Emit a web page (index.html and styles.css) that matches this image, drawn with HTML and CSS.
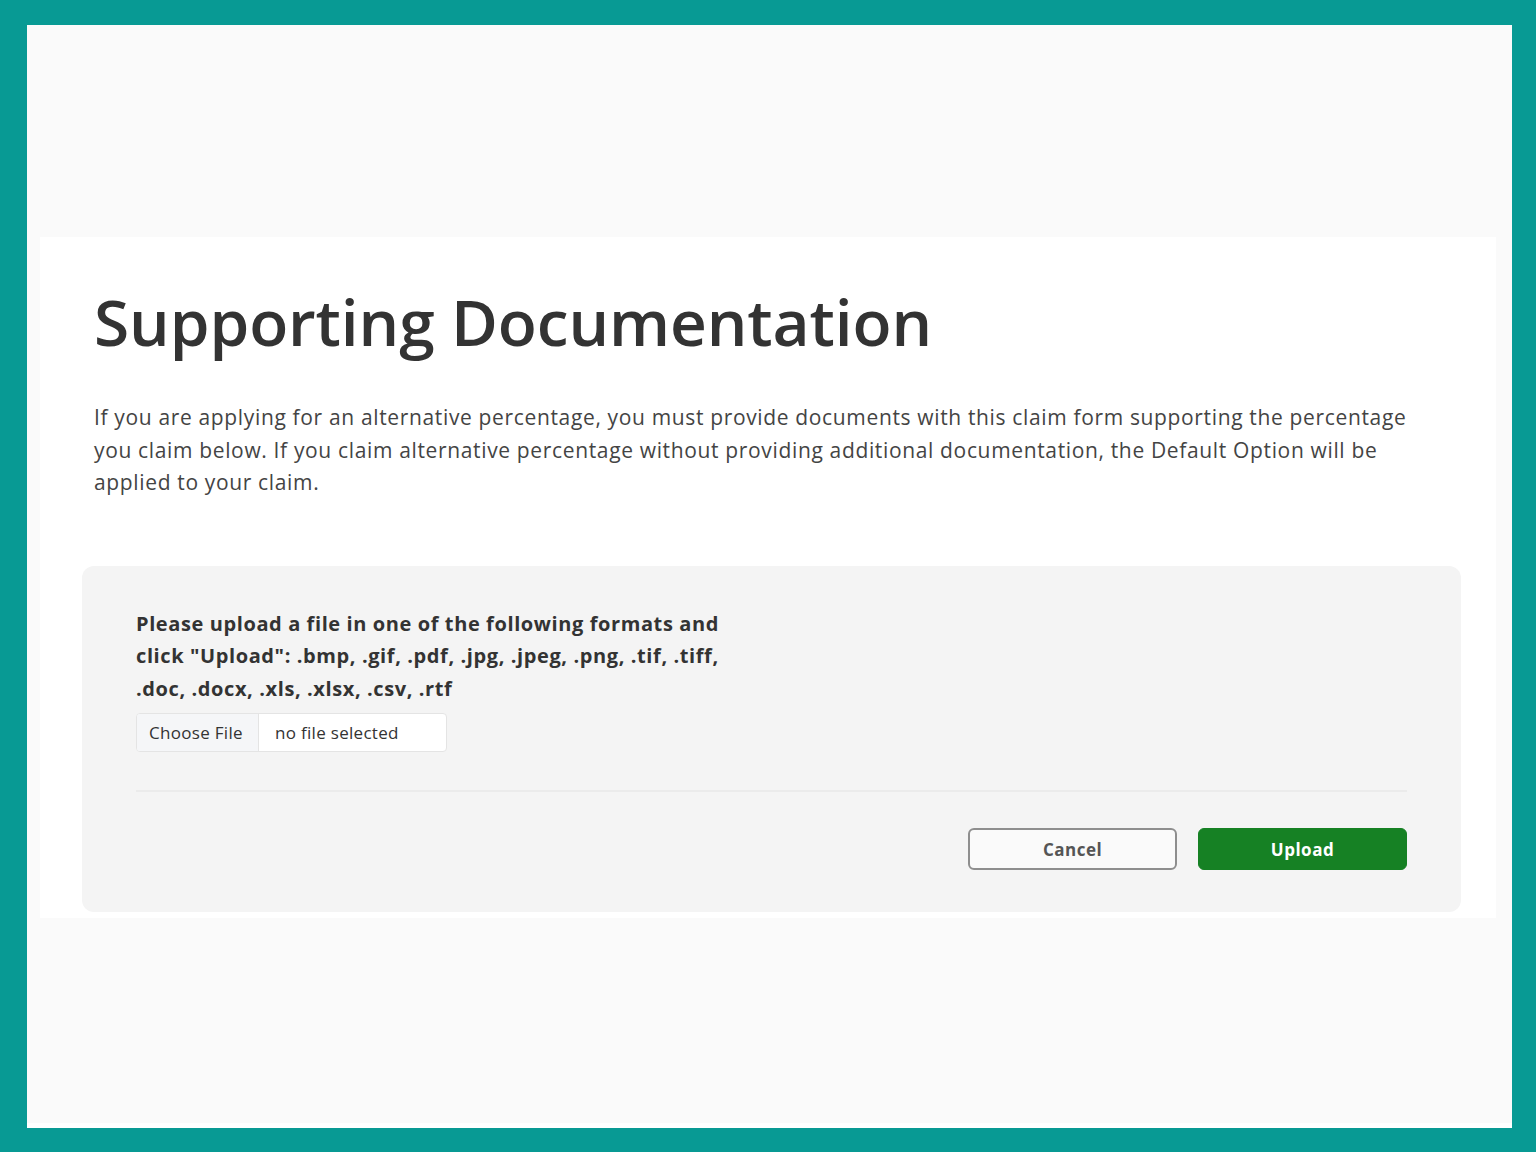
FILE: index.html
```html
<!DOCTYPE html>
<html lang="en">
<head>
<meta charset="utf-8">
<title>Supporting Documentation</title>
<link rel="stylesheet" href="styles.css">
</head>
<body>
<div class="frame">
  <div class="card">
    <h1 class="title">Supporting Documentation</h1>
    <p class="intro">If you are applying for an alternative percentage, you must provide documents with this claim form supporting the percentage you claim below. If you claim alternative percentage without providing additional documentation, the Default Option will be applied to your claim.</p>
    <div class="panel">
      <p class="formats">Please upload a file in one of the following formats and click "Upload": .bmp, .gif, .pdf, .jpg, .jpeg, .png, .tif, .tiff, .doc, .docx, .xls, .xlsx, .csv, .rtf</p>
      <div class="file">
        <span class="file-btn">Choose File</span>
        <span class="file-name">no file selected</span>
      </div>
      <div class="divider"></div>
      <div class="actions">
        <button class="btn btn-cancel">Cancel</button>
        <button class="btn btn-upload">Upload</button>
      </div>
    </div>
  </div>
</div>
</body>
</html>
```

FILE: styles.css
```css
* { box-sizing: border-box; }
html, body { margin: 0; padding: 0; }
body {
  background: #089a94;
  padding: 25px 24px 24px 27px;
  font-family: "Open Sans", "Liberation Sans", sans-serif;
}
.frame {
  background: #fafafa;
  height: 1103px;
  padding: 212px 16px 0 13px;
  border-bottom: 5px solid #ffffff;
}
.card {
  background: #ffffff;
  height: 681px;
  padding: 40px 35px 0 42px;
}
.title {
  margin: 0 0 0 12px;
  font-size: 64px;
  line-height: 90px;
  font-weight: 600;
  color: #333333;
  letter-spacing: -0.1px;
}
.intro {
  margin: 34px 0 0 12px;
  font-size: 21px;
  line-height: 32.5px;
  letter-spacing: 0.65px;
  color: #444444;
  max-width: 1335px;
}
.panel {
  margin-top: 67px;
  background: #f4f4f4;
  border-radius: 12px;
  padding: 42px 54px 42px 54px;
}
.formats {
  margin: 0;
  max-width: 600px;
  font-size: 20px;
  line-height: 32.5px;
  font-weight: 700;
  letter-spacing: 0.6px;
  color: #333333;
}
.file {
  margin-top: 8px;
  display: inline-flex;
  height: 39px;
  width: 311px;
  border: 1px solid #e4e4e4;
  border-radius: 4px;
  background: #ffffff;
  overflow: hidden;
  font-size: 17px;
  letter-spacing: 0.3px;
  color: #333333;
}
.file-btn {
  display: flex;
  align-items: center;
  padding: 0 12px;
  width: 122px;
  background: #f5f6f8;
  border-right: 1px solid #e4e4e4;
}
.file-name {
  display: flex;
  align-items: center;
  padding: 0 16px;
}
.divider {
  margin-top: 38px;
  height: 2px;
  background: #ebebeb;
}
.actions {
  display: flex;
  justify-content: flex-end;
  gap: 21px;
  margin-top: 36px;
}
.btn {
  width: 209px;
  height: 42px;
  border-radius: 6px;
  font-family: inherit;
  font-size: 17px;
  font-weight: 700;
  letter-spacing: 0.5px;
  cursor: pointer;
}
.btn-cancel {
  background: #fafafa;
  border: 2px solid #8e8e8e;
  color: #555555;
}
.btn-upload {
  background: #168124;
  border: 1px solid #168124;
  color: #ffffff;
}
```
